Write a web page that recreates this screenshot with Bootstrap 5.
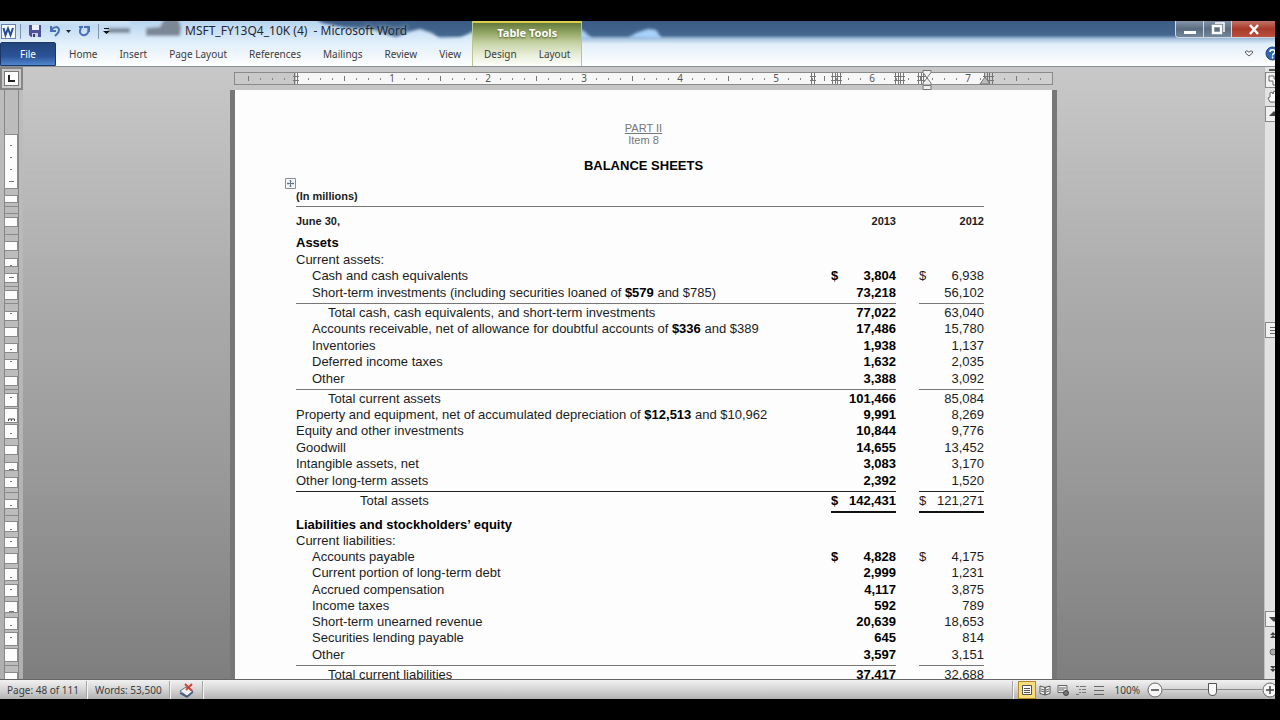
<!DOCTYPE html>
<html lang="en">
<head>
<meta charset="utf-8">
<meta name="viewport" content="width=device-width, initial-scale=1">
<title>MSFT_FY13Q4_10K (4) - Microsoft Word</title>
<link href="https://cdn.jsdelivr.net/npm/bootstrap@5.3.0/dist/css/bootstrap.min.css" rel="stylesheet">
<style>
  body { background: #000; font-family: "Noto Sans", "Open Sans", sans-serif; font-size: 10px; line-height: 16px; color: #3c3c3c; }
  button { font: inherit; color: inherit; border: 0; background: none; padding: 0; }
  svg { display: block; flex: none; }
  .app-window { height: 100vh; padding: 21px 5px 21px 0; }

  /* title bar and ribbon tabs */
  .ribbon-head { background: linear-gradient(#3b5c84 0, #44678f 14px, #a9c4de 18px, #e2effb 23px, #eef5fb 32px, #fdfeff 44px); border-bottom: 1px solid #8b9096; height: 46px; }
  .glass-art { inset: 0; width: 100%; height: 100%; z-index: 0; }
  .title-row { height: 20px; padding-left: 1px; }
  .title-text { font-size: 12px; line-height: 20px; color: #1e2833; padding-left: 75px; text-shadow: 0 0 4px #cfe2f5; white-space: nowrap; }
  .v-sep { width: 1px; height: 15px; background: #7f93ab; }
  .tab-row { height: 25px; }
  .tab-row button { padding: 0 11px; line-height: 26px; }
  .tab-row .file-tab { width: 56px; height: 24px; color: #fff; background: linear-gradient(#24457d, #2b5297 60%, #4f86d0); border: 1px solid #1c3766; border-radius: 2px 2px 0 0; margin: 1px 2px 0 0; line-height: 22px; }
  .context-group { border: 1px solid #b9c78a; border-bottom: 0; border-top: 2px solid #d8cf4a; background: linear-gradient(#63783c, #93a765 10px, #c6d2a5 20px, #e9eed9 32px, #fdfefb 43px); }
  .context-label { height: 18px; line-height: 20px; font-size: 11px; font-weight: 700; color: #fff; text-shadow: 0 1px 2px #4a5a28; }
  .win-btns { height: 17px; border: 1px solid #cfd8e2; border-top: 0; border-right: 0; border-radius: 0 0 0 4px; overflow: hidden; }
  .win-btns button { width: 28px; background: linear-gradient(#8294a6, #5b6c80 50%, #74879b); border-right: 1px solid #cfd8e2; }
  .win-btns .close-btn { width: 43px; background: linear-gradient(#c07468, #a93a2a 50%, #b9503c); border-right: 0; }
  .help-row { margin-right: -5px; }

  /* document work area */
  .work-area { background: linear-gradient(#c8c8c8, #adadad 35%, #9a9a9a 65%, #7e7e7e); min-height: 0; }
  .left-strip { width: 23px; background: linear-gradient(#bdbdbd, #b0b0b0); }
  .tab-picker { width: 23px; height: 23px; border: 2px solid #858585; background: #c9c9c9; }
  .tab-picker span { width: 15px; height: 15px; background: #fff; border: 1px solid #777; }
  .v-ruler { width: 15px; margin-left: 4px; }
  .page-col { padding-top: 5px; min-width: 0; }
  .h-ruler { width: 819px; max-width: 100%; margin-bottom: 5px; }
  .paper { width: 817px; max-width: 100%; background: #fdfdfd; box-shadow: -3px 0 0 2px #777, 3px 0 0 2px #777; clip-path: inset(0 -5px 0 -5px); padding: 32px 61px 0; font-family: "Liberation Sans", Arial, sans-serif; color: #1c1c1c; font-size: 13px; }
  .page-head { font-size: 11px; line-height: 12px; color: #777; }
  .doc-title { font-size: 13px; line-height: 16px; font-weight: 700; color: #000; margin: 12px 0 14px; }
  .sheet-wrap { width: 688px; }
  .move-handle { left: -11px; top: -10px; }
  .sheet { width: 100%; border-collapse: separate; border-spacing: 0; white-space: nowrap; }
  .sheet th, .sheet td { padding: 0; line-height: 16px; text-align: left; font-weight: 400; vertical-align: top; }
  .sheet .cur { width: 12px; }
  .sheet .amt { width: 53px; text-align: right; }
  .sheet .spacer { width: 23px; }
  .sheet b, .sheet .y13, .sheet .sec th { font-weight: 700; color: #000; }
  .sheet .cap th { font-size: 11px; font-weight: 700; padding-bottom: 2px; border-bottom: 1px solid #777; }
  .sheet .yrs th { font-size: 11px; font-weight: 700; padding: 6px 0; }
  .sheet .in1 th { padding-left: 16px; }
  .sheet .in2 th { padding-left: 32px; }
  .sheet .in4 th { padding-left: 64px; }
  .sheet .up > * { padding-top: 1px; }
  .sheet .last > * { padding-bottom: 2px; }
  .sheet .sum > :not(.spacer) { border-top: 1px solid #777; padding-top: 1px; }
  .sheet .grand > :not(.spacer) { border-top-color: #222; padding-bottom: 2px; }
  .sheet .grand td:not(.spacer) { border-bottom: 2px solid #111; }
  .sheet .after > * { padding-top: 4px; }

  /* vertical scrollbar, its right edge running off the window */
  .v-scroll { width: 11px; background: #e2e2e2; border-left: 1px solid #c0c0c0; overflow: hidden; }
  .v-scroll button { width: 17px; height: 16px; flex: none; }
  .v-scroll .split-bar { height: 5px; }
  .v-scroll .pan-btn { height: 18px; }
  .v-scroll .boxed { border: 1px solid #888; background: #f1f1f1; }
  .v-scroll .above { flex: 200 1 0; }
  .v-scroll .below { flex: 274 1 0; }

  /* status bar */
  .status { height: 20px; background: linear-gradient(#f1f1f1, #d5d5d5 50%, #b2b2b2); border-top: 1px solid #666; overflow: hidden; white-space: nowrap; }
  .status .s-sep { width: 2px; height: 18px; background: #a5a5a5; border-right: 1px solid #f5f5f5; }
  .status .count-btn { padding: 0 7px; line-height: 20px; }
  .status .view-btn { width: 18px; height: 18px; }
  .status .view-btn.on { background: #f8dd7c; border: 1px solid #b58b23; }
  .zoom-slide { appearance: none; width: 99px; height: 16px; background: linear-gradient(#888, #888) center / 100% 1px no-repeat; margin: 0; }
  .zoom-slide::-webkit-slider-thumb { appearance: none; width: 9px; height: 13px; background: #f7f7f7; border: 1px solid #555; border-radius: 1px 1px 5px 5px; }
  .tail { margin-right: -3px; }
</style>
</head>
<body>
<div class="app-window d-flex flex-column overflow-hidden">

  <header class="ribbon-head position-relative d-flex flex-shrink-0 overflow-hidden">
    <svg class="glass-art position-absolute" viewBox="0 0 1275 45" preserveAspectRatio="none" aria-hidden="true">
      <defs>
        <filter id="soft" x="-10%" y="-40%" width="120%" height="180%"><feGaussianBlur stdDeviation="1.5"/></filter>
        <linearGradient id="sky" x1="0" y1="0" x2="0" y2="1"><stop offset="0" stop-color="#a3c8ec"/><stop offset="1" stop-color="#e9f4fd"/></linearGradient>
      </defs>
      <g filter="url(#soft)">
        <path d="M-10-10H306L322 2 345 7 375 9 396 17 408 11 420 8 432 12 440 18 460 17 474 10 474 26H-10z" fill="url(#sky)"/>
        <path d="M-10-6H130V3H-10z" fill="#cfe1f2"/>
        <path d="M108 7h22v5h-22zM146 7l14-1 4-8h14l3 8-1 9h-34z" fill="#7b8795"/>
        <path d="M578 18V8l6 2 8 8zM628 17l8-5 12-4 8 1 6 9z" fill="#a9d0f8"/>
      </g>
    </svg>
    <div class="position-relative d-flex flex-column">
      <div class="title-row d-flex align-items-center">
        <svg width="15" height="15" viewBox="0 0 15 15" aria-hidden="true"><rect x=".5" y=".5" width="14" height="14" fill="#f6faff" stroke="#6684ad"/><path d="M2.500 4l2 7L7 4.500 9.500 11l2.500-7" fill="none" stroke="#234f92" stroke-width="2"/></svg>
        <span class="v-sep ms-1 me-2"></span>
        <button aria-label="Save"><svg width="12" height="12" viewBox="0 0 12 12"><path d="M0 0h12v12H2l-2-2z" fill="#4d4f9b"/><path d="M3 0h7v5H3z" fill="#eef0fa"/><path d="M3 8h6v4H3z" fill="#c9cde6"/><path d="M4 9h2v3H4z" fill="#333a7a"/></svg></button>
        <button class="ms-2" aria-label="Undo"><svg width="22" height="12" viewBox="0 0 22 12"><path d="M2 1v5h5M2 6c2-5 8-5 8-1 0 3-2 4-4 6" fill="none" stroke="#4870b4" stroke-width="2"/><path d="M17 5h5l-2.500 3z" fill="#222"/></svg></button>
        <button class="ms-2" aria-label="Repeat"><svg width="11" height="12" viewBox="0 0 11 12"><path d="M2 3c-3 5 1 8 4 7s4-4 3-8M5 2h5v5M0 2h4" fill="none" stroke="#4870b4" stroke-width="2"/></svg></button>
        <span class="v-sep ms-2 me-1"></span>
        <button aria-label="Customize Quick Access Toolbar"><svg width="7" height="7" viewBox="0 0 7 7"><path d="M1 0h5v1H1zM0 3h7L3.500 6z" fill="#111"/></svg></button>
        <span class="title-text">MSFT_FY13Q4_10K (4)&nbsp; - Microsoft Word</span>
      </div>
      <nav class="tab-row d-flex" aria-label="Ribbon tabs">
        <button class="file-tab">File</button><button>Home</button><button>Insert</button><button>Page Layout</button><button>References</button><button>Mailings</button><button>Review</button><button>View</button>
      </nav>
    </div>
    <div class="context-group position-relative d-flex flex-column">
      <div class="context-label text-center">Table Tools</div>
      <nav class="tab-row d-flex" aria-label="Table tools tabs"><button>Design</button><button>Layout</button></nav>
    </div>
    <div class="position-relative flex-grow-1 d-flex flex-column align-items-end">
      <div class="win-btns d-flex">
        <button class="d-flex justify-content-center align-items-center" aria-label="Minimize"><svg width="14" height="12" viewBox="0 0 14 12"><path d="M1 8h12v3H1z" fill="#fff"/></svg></button>
        <button class="d-flex justify-content-center align-items-center" aria-label="Restore"><svg width="14" height="14" viewBox="0 0 14 14"><path d="M4 1h9v9" fill="none" stroke="#fff" stroke-width="1.500"/><path d="M2 4h8v7H2z" fill="none" stroke="#fff" stroke-width="2.500"/></svg></button>
        <button class="close-btn d-flex justify-content-center align-items-center" aria-label="Close"><svg width="12" height="11" viewBox="0 0 12 11"><path d="M2 1l8 9M10 1L2 10" stroke="#fff" stroke-width="2.500"/></svg></button>
      </div>
      <div class="help-row d-flex align-items-center mt-2 gap-2">
        <button class="me-1" aria-label="Minimize the ribbon"><svg width="8" height="7" viewBox="0 0 8 7"><path d="M.5 1.500L2 .8l2 1.400L6 .8l1.500.7v1.500L4 6 .5 3z" fill="#fff" stroke="#555"/></svg></button>
        <button aria-label="Help"><svg width="15" height="15" viewBox="0 0 15 15"><circle cx="7.500" cy="7.500" r="6.500" fill="#2f66b0" stroke="#1f4680"/><path d="M5 6c0-3 5-3 5 0 0 1.500-2.500 1.500-2.500 3.500M7.500 10.500v2" stroke="#fff" stroke-width="1.500" fill="none"/></svg></button>
      </div>
    </div>
  </header>

  <main class="work-area d-flex flex-grow-1 overflow-hidden">
    <div class="left-strip flex-shrink-0">
      <button class="tab-picker d-flex justify-content-center align-items-center" aria-label="Tab stop"><span class="d-flex justify-content-center align-items-center"><svg width="7" height="7" viewBox="0 0 7 7"><path d="M1 0v6h6" fill="none" stroke="#222" stroke-width="2"/></svg></span></button>
      <svg id="vRuler" class="v-ruler" width="15" height="590" aria-hidden="true"></svg>
    </div>

    <div class="page-col flex-grow-1 d-flex flex-column align-items-center overflow-hidden">
      <svg id="hRuler" class="h-ruler" width="819" height="13" overflow="visible" aria-hidden="true"></svg>
      <article class="paper flex-grow-1">
        <div class="page-head text-center"><u>PART II</u><br>Item 8</div>
        <h1 class="doc-title text-center">BALANCE SHEETS</h1>
        <div class="sheet-wrap position-relative">
          <svg class="move-handle position-absolute" width="11" height="11" viewBox="0 0 11 11" aria-hidden="true"><path d="M.5.5h10v10H.5z" fill="#f5f7fa" stroke="#8690a2"/><path d="M5.500 2v7M2 5.500h7M4.500 3h2M4.500 8h2M3 4.500v2M8 4.500v2" stroke="#6a748c"/></svg>
          <table class="sheet">
            <tbody>
              <tr class="cap"><th colspan="6">(In millions)</th></tr>
              <tr class="yrs"><th>June 30,</th><th class="cur"></th><th class="amt">2013</th><th class="spacer"></th><th class="cur"></th><th class="amt">2012</th></tr>
              <tr class="sec"><th colspan="6">Assets</th></tr>
              <tr class="up"><th colspan="6">Current assets:</th></tr>
              <tr class="in1"><th>Cash and cash equivalents</th><td class="cur y13">$</td><td class="amt y13">3,804</td><td class="spacer"></td><td class="cur">$</td><td class="amt">6,938</td></tr>
              <tr class="in1 up last"><th>Short-term investments (including securities loaned of <b>$579</b> and $785)</th><td></td><td class="amt y13">73,218</td><td class="spacer"></td><td></td><td class="amt">56,102</td></tr>
              <tr class="in2 sum"><th>Total cash, cash equivalents, and short-term investments</th><td></td><td class="amt y13">77,022</td><td class="spacer"></td><td></td><td class="amt">63,040</td></tr>
              <tr class="in1"><th>Accounts receivable, net of allowance for doubtful accounts of <b>$336</b> and $389</th><td></td><td class="amt y13">17,486</td><td class="spacer"></td><td></td><td class="amt">15,780</td></tr>
              <tr class="in1 up"><th>Inventories</th><td></td><td class="amt y13">1,938</td><td class="spacer"></td><td></td><td class="amt">1,137</td></tr>
              <tr class="in1"><th>Deferred income taxes</th><td></td><td class="amt y13">1,632</td><td class="spacer"></td><td></td><td class="amt">2,035</td></tr>
              <tr class="in1 up last"><th>Other</th><td></td><td class="amt y13">3,388</td><td class="spacer"></td><td></td><td class="amt">3,092</td></tr>
              <tr class="in2 sum"><th>Total current assets</th><td></td><td class="amt y13">101,466</td><td class="spacer"></td><td></td><td class="amt">85,084</td></tr>
              <tr><th>Property and equipment, net of accumulated depreciation of <b>$12,513</b> and $10,962</th><td></td><td class="amt y13">9,991</td><td class="spacer"></td><td></td><td class="amt">8,269</td></tr>
              <tr><th>Equity and other investments</th><td></td><td class="amt y13">10,844</td><td class="spacer"></td><td></td><td class="amt">9,776</td></tr>
              <tr class="up"><th>Goodwill</th><td></td><td class="amt y13">14,655</td><td class="spacer"></td><td></td><td class="amt">13,452</td></tr>
              <tr><th>Intangible assets, net</th><td></td><td class="amt y13">3,083</td><td class="spacer"></td><td></td><td class="amt">3,170</td></tr>
              <tr class="up last"><th>Other long-term assets</th><td></td><td class="amt y13">2,392</td><td class="spacer"></td><td></td><td class="amt">1,520</td></tr>
              <tr class="in4 sum grand"><th>Total assets</th><td class="cur y13">$</td><td class="amt y13">142,431</td><td class="spacer"></td><td class="cur">$</td><td class="amt">121,271</td></tr>
              <tr class="sec after"><th colspan="6">Liabilities and stockholders’ equity</th></tr>
              <tr><th colspan="6">Current liabilities:</th></tr>
              <tr class="in1"><th>Accounts payable</th><td class="cur y13">$</td><td class="amt y13">4,828</td><td class="spacer"></td><td class="cur">$</td><td class="amt">4,175</td></tr>
              <tr class="in1"><th>Current portion of long-term debt</th><td></td><td class="amt y13">2,999</td><td class="spacer"></td><td></td><td class="amt">1,231</td></tr>
              <tr class="in1 up"><th>Accrued compensation</th><td></td><td class="amt y13">4,117</td><td class="spacer"></td><td></td><td class="amt">3,875</td></tr>
              <tr class="in1"><th>Income taxes</th><td></td><td class="amt y13">592</td><td class="spacer"></td><td></td><td class="amt">789</td></tr>
              <tr class="in1"><th>Short-term unearned revenue</th><td></td><td class="amt y13">20,639</td><td class="spacer"></td><td></td><td class="amt">18,653</td></tr>
              <tr class="in1"><th>Securities lending payable</th><td></td><td class="amt y13">645</td><td class="spacer"></td><td></td><td class="amt">814</td></tr>
              <tr class="in1 up last"><th>Other</th><td></td><td class="amt y13">3,597</td><td class="spacer"></td><td></td><td class="amt">3,151</td></tr>
              <tr class="in2 sum"><th>Total current liabilities</th><td></td><td class="amt y13">37,417</td><td class="spacer"></td><td></td><td class="amt">32,688</td></tr>
            </tbody>
          </table>
        </div>
      </article>
    </div>

    <div class="v-scroll flex-shrink-0 d-flex flex-column">
      <button class="split-bar" aria-label="Split"><svg width="17" height="5"><path d="M4 2h13v2H4z" fill="#555"/></svg></button>
      <button class="boxed" aria-label="Show ruler"><svg width="15" height="14" viewBox="0 0 15 14"><path d="M3 3h5v3h4v6H7V8H3z" fill="#fff" stroke="#666"/></svg></button>
      <button class="pan-btn" aria-label="Pan"><svg width="15" height="14" viewBox="0 0 15 14"><path d="M5 12L3 8l2-1V3l2-1 1 2 1-3 2 1v10z" fill="#fff" stroke="#666"/></svg></button>
      <button class="boxed" aria-label="Scroll up"><svg width="15" height="14" viewBox="0 0 15 14"><path d="M3 9l5-5 5 5z" fill="#444"/></svg></button>
      <div class="above"></div>
      <button class="boxed" aria-label="Scroll thumb"><svg width="15" height="14" viewBox="0 0 15 14"><path d="M4 4.500h9M4 7.500h9M4 10.500h9" stroke="#666"/></svg></button>
      <div class="below"></div>
      <button class="boxed" aria-label="Scroll down"><svg width="15" height="14" viewBox="0 0 15 14"><path d="M3 5l5 5 5-5z" fill="#444"/></svg></button>
      <button aria-label="Previous page"><svg width="17" height="16" viewBox="0 0 17 16"><path d="M5 8l3-3 3 3zM5 11l3-3 3 3z" fill="#444"/></svg></button>
      <button aria-label="Select browse object"><svg width="17" height="16" viewBox="0 0 17 16"><circle cx="8" cy="9" r="3" fill="#aaa" stroke="#666"/></svg></button>
      <button class="mb-1" aria-label="Next page"><svg width="17" height="16" viewBox="0 0 17 16"><path d="M5 7l3 3 3-3zM5 10l3 3 3-3z" fill="#444"/></svg></button>
    </div>
  </main>

  <footer class="status d-flex align-items-center flex-shrink-0">
    <button class="count-btn">Page: 48 of 111</button><span class="s-sep"></span>
    <button class="count-btn">Words: 53,500</button><span class="s-sep"></span>
    <button class="px-2" aria-label="Proofing errors"><svg width="15" height="16" viewBox="0 0 15 16"><path d="M1 9l6-4 7 4-6 5z" fill="#f2f4f8" stroke="#5d6b88"/><path d="M1 11l7 4 6-5" fill="none" stroke="#4a5a80" stroke-width="1.500"/><path d="M6 2l7 7M13 2L7 8" stroke="#d04436" stroke-width="2"/></svg></button><span class="s-sep"></span>
    <div class="tail ms-auto d-flex align-items-center">
      <span class="s-sep me-1"></span>
      <button class="view-btn on" aria-label="Print layout"><svg width="16" height="16" viewBox="0 0 16 16"><path d="M3.500 3.500h9v9h-9z" fill="#fff" stroke="#555"/><path d="M5 6.500h6M5 8.500h6M5 10.500h6" stroke="#555"/></svg></button>
      <button class="view-btn" aria-label="Full screen reading"><svg width="18" height="18" viewBox="0 0 18 18"><path d="M4 5l5 1.500V14l-5-1.500zM14 5L9 6.500V14l5-1.500z" fill="#f4f4f4" stroke="#555"/><path d="M5 8l3 1M5 10l3 1M13 8l-3 1M13 10l-3 1" stroke="#666"/></svg></button>
      <button class="view-btn" aria-label="Web layout"><svg width="18" height="18" viewBox="0 0 18 18"><path d="M4 4.500h9v7H4z" fill="#eee" stroke="#666"/><path d="M5 7h7M5 9h5" stroke="#666"/><circle cx="12" cy="12" r="2.500" fill="#777" stroke="#444"/></svg></button>
      <button class="view-btn" aria-label="Outline"><svg width="18" height="18" viewBox="0 0 18 18"><path d="M4 5.500h3M8 5.500h6M7 8.500h2M10 8.500h4M7 11.500h2M10 11.500h4M4 13.500h3" stroke="#777"/></svg></button>
      <button class="view-btn" aria-label="Draft"><svg width="18" height="18" viewBox="0 0 18 18"><path d="M4 5.500h10M4 9.500h10M4 13.500h10" stroke="#666"/></svg></button>
      <button class="count-btn">100%</button>
      <button aria-label="Zoom out"><svg width="16" height="16" viewBox="0 0 16 16"><circle cx="8" cy="8" r="7" fill="#f6f6f6" stroke="#666"/><path d="M4 8h8" stroke="#444" stroke-width="1.500"/></svg></button>
      <input class="zoom-slide" type="range" min="0" max="100" value="50" aria-label="Zoom">
      <button aria-label="Zoom in"><svg width="16" height="16" viewBox="0 0 16 16"><circle cx="8" cy="8" r="7" fill="#f6f6f6" stroke="#666"/><path d="M4 8h8M8 4v8" stroke="#444" stroke-width="1.500"/></svg></button>
    </div>
  </footer>
</div>

<script src="https://cdn.jsdelivr.net/npm/bootstrap@5.3.0/dist/js/bootstrap.bundle.min.js"></script>
<script>
  // Horizontal ruler: 96px to the inch, zero at x = 62, a dot every eighth.
  const INCH = 96, ZERO = 62;
  let h = '<rect x=".5" y=".5" width="818" height="12" fill="#f7f7f7" stroke="#8a8a8a"/>' +
          '<rect x="1" y="1" width="61" height="11" fill="#c9c9c9"/><rect x="751" y="1" width="67" height="11" fill="#cfcfcf"/>';
  for (let i = -4; i < 63; i++) {
    const x = ZERO + i * INCH / 8;
    if (i === 0) continue;
    if (i % 8 === 0) h += `<text x="${x}" y="10" text-anchor="middle" font-size="10" fill="#555">${i / 8}</text>`;
    else if (i % 4 === 0) h += `<rect x="${x}" y="4" width="1" height="5" fill="#777"/>`;
    else h += `<rect x="${x}" y="6" width="1" height="2" fill="#888"/>`;
  }
  // Column markers of the selected table.
  for (const x of [62, 579, 600, 605, 663, 668, 686, 691, 752, 757])
    h += `<path d="M${x - 1.5} 1v11M${x + 1.5} 1v11M${x - 3} 4.500h6M${x - 3} 8.500h6" stroke="#777" fill="none"/>`;
  h += '<path d="M689-1.500h8v2l-4 5.500 4 5v2h-8v-2l4-5-4-5.500zM689 13.500h8v4h-8z" fill="#eee" stroke="#777"/>' +
       '<path d="M746 12l5-7 5 7z" fill="#bbb" stroke="#777"/>';
  document.getElementById('hRuler').innerHTML = h;

  // Vertical ruler: white stretches are table rows, [start, end] in window pixels.
  const TOP = 90;
  const rows = [[134,188],[195,202],[217,226],[241,250],[258,266],[273,282],[290,299],[311,320],[327,336],[343,352],[359,369],[376,385],[393,406],[408,422],[424,438],[445,454],[462,470],[477,487],[499,508],[521,531],[537,547],[553,563],[568,580],[584,596],[601,612],[617,629],[632,645],[648,661],[672,681]];
  let v = '<rect x=".5" y="-1" width="14" height="592" fill="#bcbcbc" stroke="#858585"/>';
  for (const [a, b] of rows)
    v += `<rect x=".5" y="${a - TOP + .5}" width="13" height="${b - a}" fill="#fcfcfc" stroke="#8a8a8a"/>`;
  for (const y of [206, 213, 234, 286, 303, 389, 492, 515, 665])
    v += `<rect x="1" y="${y - TOP}" width="13" height="1" fill="#8a8a8a"/>`;
  for (const y of [145, 157, 169, 265, 313, 349, 361, 397, 433, 481, 505, 529, 541, 577, 589, 625, 637])
    v += `<rect x="6" y="${y - TOP}" width="2" height="1" fill="#777"/>`;
  for (const y of [181, 277, 469, 611])
    v += `<rect x="5" y="${y - TOP}" width="5" height="1" fill="#777"/>`;
  v += `<path d="M4.500 ${421 - TOP}v-2h3v2M7.500 ${419 - TOP}h3v2" fill="none" stroke="#444"/>`;
  document.getElementById('vRuler').innerHTML = v;
</script>
</body>
</html>
